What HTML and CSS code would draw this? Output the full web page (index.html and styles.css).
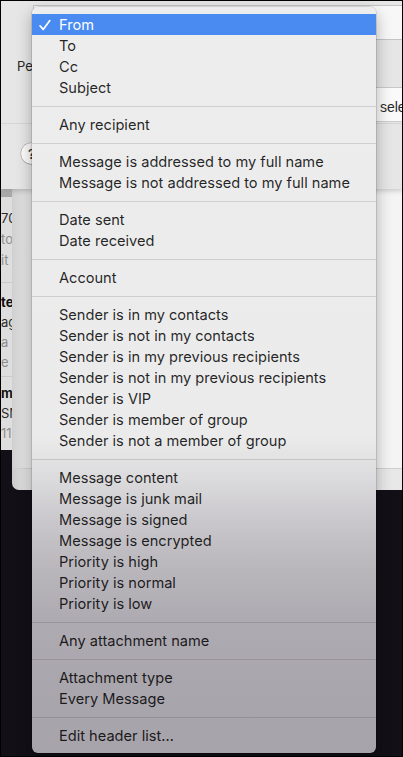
FILE: index.html
```html
<!DOCTYPE html>
<html lang="en">
<head>
<meta charset="utf-8">
<title>Rule condition menu</title>
<link rel="stylesheet" href="styles.css">
</head>
<body>
<div class="screen">
  <section class="sheet">
    <div class="desc-field"></div>
    <div class="perform"><span>Perform the following actions:</span></div>
    <div class="action-row"><div class="select-field">No mailbox selected</div></div>
    <div class="button-row"><span class="help">?</span></div>
  </section>

  <section class="lower">
    <div class="maillist">
      <div class="ml-band"></div>
      <div class="ml-msg g1"><p>70</p><p class="dim">to</p><p class="dim">it</p></div>
      <div class="ml-msg g2"><p class="bold">te</p><p>ag</p><p class="dim">a</p><p class="dim">e</p></div>
      <div class="ml-msg g3"><p class="bold">m</p><p>SM</p><p class="dim">11</p></div>
    </div>
    <div class="prefs">
      <div class="prefs-list"></div>
      <div class="prefs-footer"></div>
    </div>
  </section>

  <div class="menu">
    <div class="item selected"><svg class="mark" viewBox="0 0 12 12" width="12" height="12"><path d="M1 6.8 L4.2 10.4 L10.8 1.6" fill="none" stroke="#fff" stroke-width="1.7" stroke-linecap="round" stroke-linejoin="round"/></svg>From</div>
    <div class="item">To</div>
    <div class="item">Cc</div>
    <div class="item">Subject</div>
    <div class="sep"></div>
    <div class="item">Any recipient</div>
    <div class="sep"></div>
    <div class="item">Message is addressed to my full name</div>
    <div class="item">Message is not addressed to my full name</div>
    <div class="sep"></div>
    <div class="item">Date sent</div>
    <div class="item">Date received</div>
    <div class="sep"></div>
    <div class="item">Account</div>
    <div class="sep"></div>
    <div class="item">Sender is in my contacts</div>
    <div class="item">Sender is not in my contacts</div>
    <div class="item">Sender is in my previous recipients</div>
    <div class="item">Sender is not in my previous recipients</div>
    <div class="item">Sender is VIP</div>
    <div class="item">Sender is member of group</div>
    <div class="item">Sender is not a member of group</div>
    <div class="sep"></div>
    <div class="item">Message content</div>
    <div class="item">Message is junk mail</div>
    <div class="item">Message is signed</div>
    <div class="item">Message is encrypted</div>
    <div class="item">Priority is high</div>
    <div class="item">Priority is normal</div>
    <div class="item">Priority is low</div>
    <div class="sep"></div>
    <div class="item">Any attachment name</div>
    <div class="sep"></div>
    <div class="item">Attachment type</div>
    <div class="item">Every Message</div>
    <div class="sep"></div>
    <div class="item">Edit header list…</div>
  </div>
</div>
</body>
</html>
```

FILE: styles.css
```css
* { box-sizing: border-box; margin: 0; padding: 0; }

html, body {
  width: 403px;
  height: 757px;
  overflow: hidden;
  background: #000;
}

body {
  font-family: Inter, "Noto Sans", "Liberation Sans", sans-serif;
  color: #262626;
}

.screen {
  position: relative;
  width: 403px;
  height: 757px;
  border: 1px solid #000;
  background: #120f16;
  overflow: hidden;
}

/* ---------- rule sheet (top) ---------- */
.sheet {
  position: relative;
  z-index: 1;
  height: 188px;
  background: #e6e6e6;
  display: flex;
  flex-direction: column;
  box-shadow: 0 2px 5px rgba(0, 0, 0, 0.18);
}

.desc-field {
  margin: 4px 0 0 32px;
  height: 35px;
  background: #f7f7f7;
  border: 1px solid #c4c4c4;
  border-right: 0;
}

.perform {
  height: 47px;
  padding: 5px 0 0 16px;
  display: flex;
  align-items: center;
  font-size: 13px;
  white-space: nowrap;
  color: #262626;
}

.action-row {
  height: 35px;
  display: flex;
}

.select-field {
  margin-left: 299px;
  flex: 1;
  height: 35px;
  padding: 5px 0 0 6px;
  display: flex;
  align-items: center;
  background: #fafafa;
  border-top: 1px solid #c8c8c8;
  border-bottom: 1px solid #cdcdcd;
  font-family: "Liberation Sans", Arial, sans-serif;
  font-size: 14px;
  white-space: nowrap;
  overflow: hidden;
  color: #2a2a2a;
}

.button-row {
  flex: 1;
  padding: 19px 0 0 20px;
  border-top: 1px solid #d6d6d6;
  margin-top: 1px;
}

.help {
  display: flex;
  align-items: center;
  justify-content: center;
  width: 21px;
  height: 21px;
  border-radius: 50%;
  background: #fbfbfb;
  box-shadow: 0 0 0 0.5px rgba(0, 0, 0, 0.25), 0 1px 1px rgba(0, 0, 0, 0.12);
  font-size: 13px;
  font-weight: 600;
  color: #333;
}

/* ---------- behind the sheet ---------- */
.lower {
  display: flex;
  align-items: flex-start;
}

.maillist {
  width: 11px;
  height: 261px;
  flex: none;
  background: #dedede;
  overflow: hidden;
  font-size: 13px;
  white-space: nowrap;
  color: #2b2b2b;
}

.ml-band {
  height: 8px;
  background: linear-gradient(#b9b9b9, #a6a6a6);
}

.ml-msg p {
  overflow: hidden;
}

.ml-msg .dim { color: #8d8d8d; }
.ml-msg .bold { font-weight: 700; color: #111; }

.g1 {
  line-height: 21px;
  padding: 11px 0 11px;
  border-bottom: 1px solid #c9c9c9;
}

.g2 {
  line-height: 20px;
  padding: 9px 0 4px;
  border-bottom: 1px solid #c9c9c9;
}

.g3 {
  line-height: 20px;
  padding: 6px 0 7px;
}

.prefs {
  flex: 1;
  height: 301px;
  display: flex;
  flex-direction: column;
  border-bottom-left-radius: 7px;
  overflow: hidden;
}

.prefs-list {
  flex: 1;
  background: linear-gradient(to right, #cfcfcf, #dcdcdc 8px, #e8e8e8 18px, #f4f4f4 26px);
}

.prefs-footer {
  height: 22px;
  border-top: 1px solid #cfcfcf;
  background: linear-gradient(to right, #cbcbcb, #d8d8d8 8px, #e2e2e2 18px, #e8e8e8 26px);
}

/* ---------- popup menu ---------- */
.menu {
  position: absolute;
  z-index: 2;
  left: 31px;
  top: 6px;
  width: 344px;
  padding: 7px 0;
  border-radius: 6px;
  background: linear-gradient(to bottom,
    #ededed 0,
    #ebebeb 430px,
    #dcdbdd 470px,
    #c9c7cb 515px,
    #b8b5bb 565px,
    #afabb2 610px,
    #aaa6ad 670px,
    #a7a3aa 746px);
  box-shadow: 0 0 0 0.5px rgba(0, 0, 0, 0.22), 0 6px 16px rgba(0, 0, 0, 0.3);
  font-size: 14.6px;
  color: rgba(0, 0, 0, 0.86);
}

.item {
  display: flex;
  align-items: center;
  height: 21px;
  padding-left: 27px;
  white-space: nowrap;
}

.item.selected {
  background: #4a8bf2;
  color: #fff;
}

.mark {
  flex: none;
  margin-left: -20px;
  margin-right: 8px;
}

.sep {
  height: 16px;
  padding-top: 8px;
}

.sep::before {
  content: "";
  display: block;
  height: 1px;
  background: rgba(0, 0, 0, 0.12);
}
```
